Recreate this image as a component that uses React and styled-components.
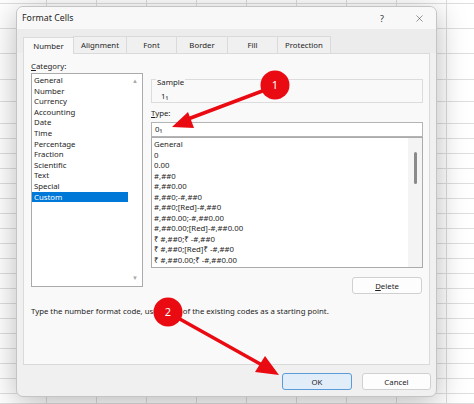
import React from "react";
import styled, { createGlobalStyle } from "styled-components";
import { X } from "lucide-react";

const categories = [
  "General",
  "Number",
  "Currency",
  "Accounting",
  "Date",
  "Time",
  "Percentage",
  "Fraction",
  "Scientific",
  "Text",
  "Special",
  "Custom",
];

const formats = [
  "General",
  "0",
  "0.00",
  "#,##0",
  "#,##0.00",
  "#,##0;-#,##0",
  "#,##0;[Red]-#,##0",
  "#,##0.00;-#,##0.00",
  "#,##0.00;[Red]-#,##0.00",
  "₹ #,##0;₹ -#,##0",
  "₹ #,##0;[Red]₹ -#,##0",
  "₹ #,##0.00;₹ -#,##0.00",
];

const tabs = [
  { label: "Number", width: 51 },
  { label: "Alignment", width: 54 },
  { label: "Font", width: 51 },
  { label: "Border", width: 52 },
  { label: "Fill", width: 51 },
  { label: "Protection", width: 54 },
];

// spreadsheet rows behind the dialog
const sheetRows = [4, 25, 25, 26, 22, 22, ...Array(18).fill(15), 10];

const GlobalStyle = createGlobalStyle`
  body {
    margin: 0;
    font-family: "Noto Sans", "Open Sans", sans-serif;
    color: #1e1e1e;
  }
`;

const Page = styled.div`
  position: relative;
  width: 474px;
  height: 404px;
  overflow: hidden;
  background: #fff;
`;

const Sheet = styled.div`
  display: flex;
  flex-direction: column;
  height: 100%;
  background-image: linear-gradient(to right, #dcdcdc 1px, transparent 1px);
  background-size: 50px 100%;
  background-position: 46px 0;
`;

const SheetRow = styled.div`
  flex: none;
  height: ${(p) => p.$h}px;
  box-sizing: border-box;
  border-bottom: 1px solid #dedede;
`;

const Dialog = styled.div`
  position: absolute;
  left: 16px;
  top: 6px;
  width: 421px;
  height: 391px;
  box-sizing: border-box;
  border: 1px solid #c4c4c4;
  border-radius: 7px;
  background: #f0f0f0;
  display: flex;
  flex-direction: column;
  overflow: hidden;
  box-shadow: 0 6px 30px rgba(0, 0, 0, 0.28);
  font-size: 7.8px;
`;

const TitleBar = styled.div`
  height: 22px;
  flex: none;
  display: flex;
  align-items: center;
  gap: 7px;
  padding: 0 2px 0 5px;
  background: #f8f8f8;
`;

const Title = styled.div`
  flex: 1;
  font-size: 8.8px;
`;

const TitleButton = styled.div`
  width: 30px;
  display: flex;
  justify-content: center;
  align-items: center;
  font-size: 9px;
  color: #333;
`;

const TabStrip = styled.div`
  height: 24px;
  flex: none;
  display: flex;
  align-items: flex-end;
  padding-left: 6px;
  background: #ececec;
`;

const Tab = styled.div`
  width: ${(p) => p.$w}px;
  height: 17px;
  box-sizing: border-box;
  margin-right: -1px;
  margin-bottom: ${(p) => (p.$active ? "-1px" : "0")};
  border: 1px solid #dadada;
  border-bottom: none;
  background: ${(p) => (p.$active ? "#f9f9f9" : "#f0f0f0")};
  display: flex;
  align-items: center;
  justify-content: center;
  position: relative;
  z-index: ${(p) => (p.$active ? 1 : 0)};
`;

const Panel = styled.div`
  height: 312px;
  flex: none;
  margin: 0 6px;
  box-sizing: border-box;
  border: 1px solid #dadada;
  background: #f9f9f9;
  padding: 7px 6px 0 7px;
`;

const Columns = styled.div`
  display: flex;
  gap: 8px;
`;

const LeftCol = styled.div`
  width: 112px;
  display: flex;
  flex-direction: column;
`;

const RightCol = styled.div`
  flex: 1;
  display: flex;
  flex-direction: column;
`;

const Label = styled.div`
  line-height: 11px;
  height: 11px;
  margin-bottom: ${(p) => p.$gap || 0}px;
  margin-top: ${(p) => p.$top || 0}px;

  u {
    text-decoration-thickness: 1px;
    text-underline-offset: 1px;
  }
`;

const ListBox = styled.div`
  height: ${(p) => p.$h}px;
  box-sizing: border-box;
  border: 1px solid #ababab;
  background: #fff;
  display: flex;
  overflow: hidden;
`;

const Items = styled.div`
  flex: 1;
  padding-top: ${(p) => p.$pad || 0}px;
  overflow: hidden;
`;

const Item = styled.div`
  line-height: ${(p) => p.$lh}px;
  height: ${(p) => p.$lh}px;
  padding-left: 2px;
  white-space: nowrap;
  background: ${(p) => (p.$selected ? "#0078d7" : "transparent")};
  color: ${(p) => (p.$selected ? "#fff" : "inherit")};
`;

const ArrowTrack = styled.div`
  width: 14px;
  display: flex;
  flex-direction: column;
  justify-content: space-between;
  align-items: center;
  padding: 3px 0 4px;
  color: #a8a8a8;
  font-size: 6px;
`;

const ThumbTrack = styled.div`
  width: 14px;
  background: #f4f4f4;
  display: flex;
  justify-content: center;
  padding-top: 14px;
`;

const Thumb = styled.div`
  width: 3px;
  height: 32px;
  border-radius: 2px;
  background: #8a8a8a;
`;

const GroupBox = styled.fieldset`
  margin: 11px 0 0;
  padding: 0 0 1px 9px;
  border: 1px solid #dcdcdc;
  min-width: 0;
`;

const Legend = styled.legend`
  margin-left: -5px;
  padding: 6px 1px 0;
  line-height: 8px;
`;

const SampleText = styled.div`
  margin-top: 5px;
  line-height: 10px;
`;

const TypeInput = styled.div`
  height: 15px;
  box-sizing: border-box;
  border: 1px solid #b4b4b4;
  background: #fff;
  padding-left: 3px;
  line-height: 13px;
`;

const Button = styled.div`
  width: ${(p) => p.$w}px;
  height: 17px;
  box-sizing: border-box;
  border: 1px solid ${(p) => (p.$primary ? "#5a9bd8" : "#d0d0d0")};
  border-radius: 3px;
  background: ${(p) => (p.$primary ? "#e1eefa" : "#fdfdfd")};
  display: flex;
  align-items: center;
  justify-content: center;
  flex: none;

  u {
    text-decoration-thickness: 1px;
    text-underline-offset: 1px;
  }
`;

const DeleteRow = styled.div`
  display: flex;
  justify-content: flex-end;
  padding-right: 1px;
  margin-top: 9px;
`;

const Hint = styled.div`
  margin-top: 12px;
  line-height: 10px;
`;

const Footer = styled.div`
  flex: 1;
  display: flex;
  justify-content: flex-end;
  align-items: flex-start;
  gap: 10px;
  padding: 8px 5px 0 0;
`;

const Overlay = styled.svg`
  position: absolute;
  left: 0;
  top: 0;
  pointer-events: none;
`;

const Marker = ({ cx, cy, n }) => (
  <g>
    <circle cx={cx} cy={cy} r="14.5" fill="#ea0a12" />
    <text
      x={cx}
      y={cy + 4}
      textAnchor="middle"
      fill="#fff"
      fontSize="11"
      fontFamily="Noto Sans, sans-serif"
    >
      {n}
    </text>
  </g>
);

const App = () => {
  return (
    <Page>
      <GlobalStyle />
      <Sheet>
        {sheetRows.map((h, i) => (
          <SheetRow key={i} $h={h} />
        ))}
      </Sheet>

      <Dialog>
        <TitleBar>
          <Title>Format Cells</Title>
          <TitleButton>?</TitleButton>
          <TitleButton>
            <X size={11} strokeWidth={1.1} />
          </TitleButton>
        </TitleBar>

        <TabStrip>
          {tabs.map((t, i) => (
            <Tab key={t.label} $w={t.width} $active={i === 0}>
              {t.label}
            </Tab>
          ))}
        </TabStrip>

        <Panel>
          <Columns>
            <LeftCol>
              <Label $gap={1}>
                <u>C</u>ategory:
              </Label>
              <ListBox $h={214}>
                <Items $pad={1}>
                  {categories.map((c) => (
                    <Item key={c} $lh={10.6} $selected={c === "Custom"}>
                      {c}
                    </Item>
                  ))}
                </Items>
                <ArrowTrack>
                  <span>▲</span>
                  <span>▼</span>
                </ArrowTrack>
              </ListBox>
            </LeftCol>

            <RightCol>
              <GroupBox>
                <Legend>Sample</Legend>
                <SampleText>1₁</SampleText>
              </GroupBox>
              <Label $top={5} $gap={3}>
                <u>T</u>ype:
              </Label>
              <TypeInput>0₁</TypeInput>
              <ListBox $h={131}>
                <Items $pad={1}>
                  {formats.map((f) => (
                    <Item key={f} $lh={10.5}>
                      {f}
                    </Item>
                  ))}
                </Items>
                <ThumbTrack>
                  <Thumb />
                </ThumbTrack>
              </ListBox>
              <DeleteRow>
                <Button $w={70}>
                  <span>
                    <u>D</u>elete
                  </span>
                </Button>
              </DeleteRow>
            </RightCol>
          </Columns>
          <Hint>
            Type the number format code, using one of the existing codes as a
            starting point.
          </Hint>
        </Panel>

        <Footer>
          <Button $w={70} $primary>
            OK
          </Button>
          <Button $w={69}>Cancel</Button>
        </Footer>
      </Dialog>

      <Overlay width="474" height="404" viewBox="0 0 474 404">
        <line
          x1="265"
          y1="90"
          x2="188"
          y2="119"
          stroke="#ea0a12"
          strokeWidth="3.5"
          strokeLinecap="round"
        />
        <polygon points="172,127 194,128 188,112" fill="#ea0a12" />
        <Marker cx={275} cy={85} n="1" />

        <line
          x1="178"
          y1="318"
          x2="262"
          y2="365"
          stroke="#ea0a12"
          strokeWidth="3.5"
          strokeLinecap="round"
        />
        <polygon points="279,375 255,372 265,356" fill="#ea0a12" />
        <Marker cx={168} cy={312} n="2" />
      </Overlay>
    </Page>
  );
};

export default App;
